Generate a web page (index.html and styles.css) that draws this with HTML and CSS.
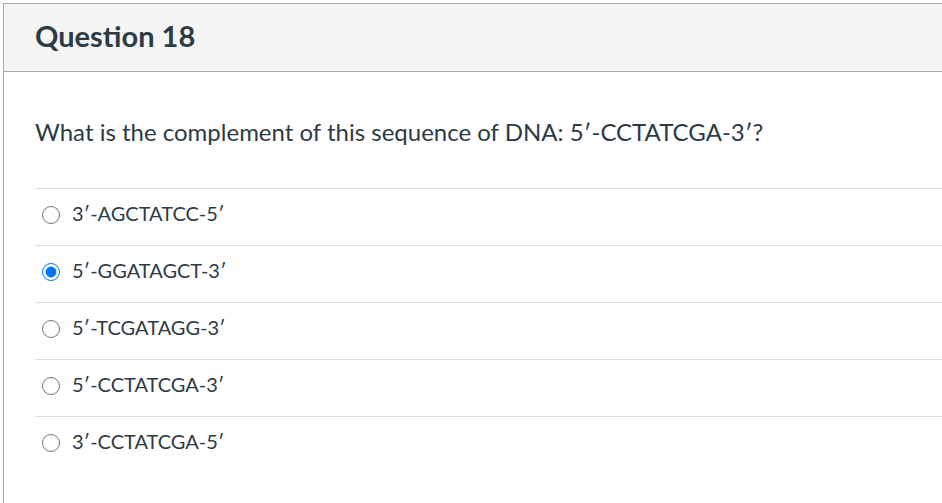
FILE: index.html
```html
<!DOCTYPE html>
<html>
<head>
<meta charset="utf-8">
<link rel="stylesheet" href="styles.css">
</head>
<body>
<div class="question">
  <div class="header"><h2 class="title">Question 18</h2></div>
  <div class="content">
    <p class="prompt">What is the complement of this sequence of DNA: 5′-CCTATCGA-3′?</p>
    <div class="answers">
      <label class="answer"><input type="radio" name="q18"><span>3′-AGCTATCC-5′</span></label>
      <label class="answer"><input type="radio" name="q18" checked><span>5′-GGATAGCT-3′</span></label>
      <label class="answer"><input type="radio" name="q18"><span>5′-TCGATAGG-3′</span></label>
      <label class="answer"><input type="radio" name="q18"><span>5′-CCTATCGA-3′</span></label>
      <label class="answer"><input type="radio" name="q18"><span>3′-CCTATCGA-5′</span></label>
    </div>
  </div>
</div>
</body>
</html>
```
FILE: styles.css
```css
html, body {
  margin: 0;
  padding: 0;
  background: #ffffff;
}
body {
  font-family: Lato, "Liberation Sans", sans-serif;
  color: #2d3b45;
  height: 503px;
  overflow: hidden;
}
.question {
  box-sizing: border-box;
  margin: 3px 0 0 3px;
  border-top: 1px solid #aaaaaa;
  border-left: 1px solid #aaaaaa;
  height: 500px;
}
.header {
  background: #f5f5f5;
  border-bottom: 1px solid #aaaaaa;
  padding: 15px 30px 0 31px;
  height: 52px;
}
.title {
  margin: 0;
  font-size: 29px;
  font-weight: 700;
  line-height: 33.6px;
}
.content {
  padding: 0 0 0 31px;
}
.prompt {
  margin: 0;
  padding: 46px 0 41px 0;
  font-size: 24px;
  line-height: 28.8px;
}
.answers {
  display: flex;
  flex-direction: column;
}
.answer {
  display: flex;
  align-items: center;
  border-top: 1px solid #dddddd;
  padding: 12px 0 20px 0;
  font-size: 20px;
  line-height: 24px;
}
.answer input {
  width: 18px;
  height: 18px;
  margin: 0 12px 0 7px;
  position: relative;
  top: 2px;
}
```
